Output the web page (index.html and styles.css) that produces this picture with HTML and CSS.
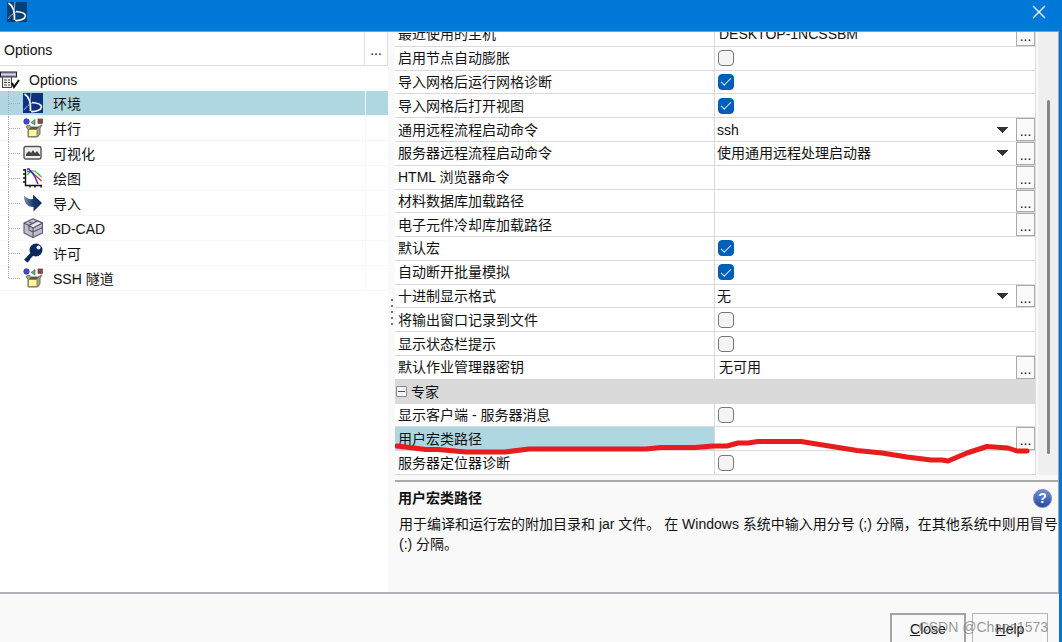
FILE: index.html
```html
<!DOCTYPE html>
<html lang="zh-CN">
<head>
<meta charset="utf-8">
<title>Options</title>
<link rel="stylesheet" href="styles.css">
</head>
<body>
<svg class="defs" aria-hidden="true">
  <symbol id="star" viewBox="0 0 20 20">
    <path d="M1.500 1C5 3 8 7 7.500 18" fill="none" stroke="#fff" stroke-width="1.700"/>
    <path d="M8 0L7 9M1 17C3 14 6 11 10 9.500" fill="none" stroke="#b9c9e2" stroke-width=".9"/>
    <path d="M9 9.500C14 10 18.500 11.500 18.500 14C18 17 13 19 8 18.500" fill="none" stroke="#fff" stroke-width="1.600"/>
  </symbol>
  <symbol id="box" viewBox="0 0 20 20">
    <circle cx="3.500" cy="3.500" r="2.700" fill="#4444f0" stroke="#30307a" stroke-width=".8"/>
    <path d="M8 4.500L12 1.500V7Z" fill="#6fae78" stroke="#47704c" stroke-width=".7"/>
    <rect x="15" y="1" width="4.500" height="4.500" fill="#9c4040" stroke="#555" stroke-width=".8"/>
    <path d="M3 8.500L6 7L8.500 9H15L19 7L17 10V16L14.500 19H5V11Z" fill="#aaa98d" stroke="#65655d" stroke-width=".9"/>
    <path d="M5.500 11.500H14V18.500H5.500Z" fill="#fff99a" stroke="#77744c" stroke-width=".8"/>
    <path d="M6 11L8 9H16L14 11Z" fill="#59583f"/>
  </symbol>
</svg>
<div class="dialog">
  <header class="titlebar">
    <svg class="app-icon" viewBox="0 0 20 20"><rect width="20" height="20" fill="#053f78"/><use href="#star"/></svg>
    <button class="close" aria-label="关闭"><svg viewBox="0 0 14 14"><path d="M1 1L13 13M13 1L1 13" stroke="#fff" stroke-width="1.300"/></svg></button>
  </header>

  <main class="content">
    <nav class="sidebar">
      <div class="tree-head"><span>Options</span><button aria-label="列">...</button></div>
      <div class="tree-root">
        <svg viewBox="0 0 20 18"><rect x="0.500" y="1" width="16" height="5" fill="#a5a0d8" stroke="#222"/><rect x="2.500" y="6" width="9" height="10.500" fill="#eee" stroke="#444"/><path d="M1 3.500H16" stroke="#dcd9f5"/><path d="M4 9H7M8 9H10M4 11.500H7M8 11.500H10M4 14H7M8 14H10" stroke="#444"/><path d="M12 12L14 16L19 9" fill="none" stroke="#111" stroke-width="2"/></svg>
        <span>Options</span>
      </div>
      <ul class="tree">
        <li class="selected"><a href="#"><svg viewBox="0 0 20 20"><rect width="20" height="20" fill="#10317f"/><use href="#star"/></svg><span>环境</span></a></li>
        <li><a href="#"><svg viewBox="0 0 20 20"><use href="#box"/></svg><span>并行</span></a></li>
        <li><a href="#"><svg viewBox="0 0 20 20"><rect x="1" y="3.500" width="17" height="12.500" rx="2" fill="#eee" stroke="#555" stroke-width="1.400"/><path d="M3 13V11L6 8L8 10L10 7L12 10L14 8L17 12V13Z" fill="#444"/></svg><span>可视化</span></a></li>
        <li><a href="#"><svg viewBox="0 0 20 20" fill="none"><path d="M2.500 1V17.500H19M0 2H2M0 6H2M0 10H2M0 14H2M7 17V19.500M12 17V19.500M18 17V19.500" stroke="#111" stroke-width="1.400"/><path d="M4 7L8 3H12L18.500 9" stroke="#20c830" stroke-width="1.200"/><path d="M4 3.500H8L18.500 13" stroke="#f02020" stroke-width="1.300"/><path d="M4 1H6L10 6L12 9L15 16" stroke="#2020f0" stroke-width="1.300"/></svg><span>绘图</span></a></li>
        <li><a href="#"><svg viewBox="0 0 20 20"><defs><linearGradient id="arrow"><stop stop-color="#7c92ad"/><stop offset=".5" stop-color="#173b6c"/><stop offset="1" stop-color="#0c2856"/></linearGradient></defs><path d="M1 2.500C4 6 7 6.500 10 6V1.500L19 10L10.500 18.500V14C5 14 1 11 1 2.500Z" fill="url(#arrow)"/></svg><span>导入</span></a></li>
        <li><a href="#"><svg viewBox="0 0 20 20" stroke="#5a596b" stroke-width="1.100" stroke-linejoin="round"><path d="M1 5L10 .8L19.500 5V15L10 19.500L1 15Z" fill="#bdbdcb"/><path d="M1 5L6 7.500L14.500 3L19.500 5L10 10V19.500M6 7.500V12L10 14L19.500 9.500M10 10L6 7.500M6 4L10.500 6" fill="none"/><path d="M6 7.500L14.500 3L19.500 5L10 10Z" fill="#e6e6ee"/></svg><span>3D-CAD</span></a></li>
        <li><a href="#"><svg viewBox="0 0 20 20"><path d="M11 9L2.500 18M4 16L6 18" stroke="#0b285d" stroke-width="4"/><circle cx="13" cy="7" r="6.500" fill="#0b285d"/><circle cx="15.500" cy="4.500" r="2" fill="#e9f0ff"/></svg><span>许可</span></a></li>
        <li><a href="#"><svg viewBox="0 0 20 20"><use href="#box"/></svg><span>SSH 隧道</span></a></li>
      </ul>
    </nav>
    <div class="splitter"><i></i><i></i><i></i><i></i><i></i></div>
    <section class="details">
      <div class="viewport">
        <form class="sheet">
          <div class="row"><label for="p1">最近使用的主机</label><div class="value"><input class="indent" id="p1" value="DESKTOP-1NCSSBM"><button type="button" class="more">...</button></div></div>
          <div class="row"><label for="p2">启用节点自动膨胀</label><div class="value"><input type="checkbox" id="p2"></div></div>
          <div class="row"><label for="p3">导入网格后运行网格诊断</label><div class="value"><input type="checkbox" id="p3" checked></div></div>
          <div class="row"><label for="p4">导入网格后打开视图</label><div class="value"><input type="checkbox" id="p4" checked></div></div>
          <div class="row"><label for="p5">通用远程流程启动命令</label><div class="value"><select id="p5"><option>ssh</option></select><button type="button" class="more">...</button></div></div>
          <div class="row"><label for="p6">服务器远程流程启动命令</label><div class="value"><select id="p6"><option>使用通用远程处理启动器</option></select><button type="button" class="more">...</button></div></div>
          <div class="row"><label for="p7">HTML 浏览器命令</label><div class="value"><input id="p7"><button type="button" class="more">...</button></div></div>
          <div class="row"><label for="p8">材料数据库加载路径</label><div class="value"><input id="p8"><button type="button" class="more">...</button></div></div>
          <div class="row"><label for="p9">电子元件冷却库加载路径</label><div class="value"><input id="p9"><button type="button" class="more">...</button></div></div>
          <div class="row"><label for="p10">默认宏</label><div class="value"><input type="checkbox" id="p10" checked></div></div>
          <div class="row"><label for="p11">自动断开批量模拟</label><div class="value"><input type="checkbox" id="p11" checked></div></div>
          <div class="row"><label for="p12">十进制显示格式</label><div class="value"><select id="p12"><option>无</option></select><button type="button" class="more">...</button></div></div>
          <div class="row"><label for="p13">将输出窗口记录到文件</label><div class="value"><input type="checkbox" id="p13"></div></div>
          <div class="row"><label for="p14">显示状态栏提示</label><div class="value"><input type="checkbox" id="p14"></div></div>
          <div class="row"><label for="p15">默认作业管理器密钥</label><div class="value"><input class="indent" id="p15" value="无可用"><button type="button" class="more">...</button></div></div>
          <div class="group"><button type="button" class="toggle" aria-label="折叠"></button><span>专家</span></div>
          <div class="row"><label for="p16">显示客户端 - 服务器消息</label><div class="value"><input type="checkbox" id="p16"></div></div>
          <div class="row active"><label for="p17">用户宏类路径</label><div class="value"><input id="p17"><button type="button" class="more">...</button></div></div>
          <div class="row"><label for="p18">服务器定位器诊断</label><div class="value"><input type="checkbox" id="p18"></div></div>
        </form>
        <div class="scrollbar"><div class="thumb"></div></div>
        <svg class="marker" viewBox="394 436 636 30"><path d="M396 446L425 449.500H437L465 452H504L528 449H645L660 447.500H694L712 446H726L737 443H747L757 441.500H800L828 446L856 450.500L881 453L906 457L930 460H941L947 461L966 453L986 446.500L1007 448L1016 451H1026" fill="none" stroke="#e81c1c" stroke-width="5" stroke-linecap="round" stroke-linejoin="round"/></svg>
      </div>
      <div class="description">
        <div class="description-head"><h2>用户宏类路径</h2><button class="help" aria-label="帮助">?</button></div>
        <p>用于编译和运行宏的附加目录和 jar 文件。 在 Windows 系统中输入用分号 (;) 分隔，在其他系统中则用冒号 (:) 分隔。</p>
      </div>
    </section>
  </main>
  <footer class="footer">
    <button class="default"><u>C</u>lose</button>
    <button><u>H</u>elp</button>
    <span class="watermark">CSDN @Chaos1573</span>
  </footer>
</div>
</body>
</html>
```
FILE: styles.css
```css
* { box-sizing: border-box; }
body { margin: 0; background: #f9f9f9; color: #111; font: 14px/20px "Liberation Sans", "Noto Sans CJK SC", sans-serif; }
button, input, select { margin: 0; padding: 0; border: 0; border-radius: 0; background: none; color: inherit; font: inherit; }
.defs { position: absolute; width: 0; height: 0; }
.dialog { display: flex; flex-direction: column; height: 100vh; overflow: hidden; border-right: 3px solid #0078d7; }
.titlebar { display: flex; align-items: center; justify-content: space-between; flex: none; height: 32px; padding: 0 13px 7px 7px; background: #0078d7; border-bottom: 1px solid #8e9bb3; }
.app-icon { width: 20px; height: 20px; }
.close svg { display: block; width: 14px; height: 14px; }

.content { display: flex; flex: 1; min-height: 0; border-right: 1px solid #a5a5ad; border-bottom: 2px solid #b2b2ba; }
.sidebar { flex: none; width: 388px; background: #fff; }
.tree-head { display: grid; grid-template-columns: 1fr 23px; height: 34px; border-bottom: 1px solid #ddd; }
.tree-head span { display: flex; align-items: center; padding: 2px 0 0 4px; border-right: 1px solid #ddd; }
.tree-head button { border-right: 1px solid #ddd; padding-top: 2px; }
.tree-root { display: flex; align-items: center; gap: 9px; height: 25px; padding-top: 2px; }
.tree-root svg { width: 20px; height: 18px; }
.tree { margin: 0; padding: 0; list-style: none; }
.tree li { position: relative; height: 25px; padding-left: 23px; border-bottom: 1px solid #f7f7f7; background: linear-gradient(#f7f7f7, #f7f7f7) 365px 0 / 1px 100% no-repeat; }
.tree li::before { content: ""; position: absolute; left: 8px; top: 0; height: 100%; border-left: 1px dotted #aaa; }
.tree li:last-child::before { height: 50%; }
.tree li::after { content: ""; position: absolute; left: 9px; top: 12px; width: 11px; border-top: 1px dotted #aaa; }
.tree .selected { background-color: #afd7e1; }
.tree a { display: flex; align-items: center; gap: 10px; height: 100%; color: inherit; text-decoration: none; }
.tree a span { padding-top: 2px; }
.tree a svg { width: 20px; height: 20px; }

.splitter { display: flex; flex-direction: column; align-items: center; justify-content: center; gap: 4px; flex: none; width: 7px; }
.splitter i { width: 2px; height: 2px; background: #777; }
.details { display: flex; flex-direction: column; flex: 1; min-width: 0; }
.viewport { position: relative; display: flex; gap: 2px; flex: 1; min-height: 0; padding-bottom: 5px; overflow: hidden; }
.sheet { display: grid; grid-auto-rows: 1fr; flex: 1; min-width: 0; margin-top: -9px; border-right: 1px solid #ddd; background: #fff; }
.row { display: grid; grid-template-columns: 1fr 1fr; min-height: 0; border-bottom: 1px solid #d9d9d9; }
.row label { display: flex; align-items: center; min-height: 0; padding-left: 3px; border-right: 1px solid #d9d9d9; }
.value { display: flex; align-items: center; min-width: 0; min-height: 0; padding-left: 2px; }
.value input:not([type]), .value select { flex: 1; min-width: 0; height: 20px; }
.value .indent { padding-left: 2px; }
.value select { appearance: none; background: conic-gradient(from -47deg at 50% 100%, #333 94deg, transparent 0) right 7px center / 13px 6px no-repeat; }
.more { flex: none; width: 19px; height: 100%; padding-top: 3px; border: 1px solid #aaa; background: #fafafa; line-height: 18px; }
.value input[type="checkbox"] { appearance: none; display: grid; place-items: center; width: 16px; height: 16px; margin-left: 1px; border: 1px solid #777; border-radius: 4px; background: #f4f4f4; }
.value input:checked { border-color: #005fb8; background: #005fb8; }
.value input:checked::before { content: ""; width: 9px; height: 4px; margin-bottom: 2px; border: solid #cfe5fa; border-width: 0 0 1px 1px; transform: rotate(-45deg); }
.active label { background: #afd7e1; }
.group { display: flex; align-items: center; gap: 4px; min-height: 0; padding-left: 1px; background: #dadada; }
.toggle { display: grid; place-items: center; width: 11px; height: 11px; border: 1px solid #888; border-radius: 1px; background: #f4f4f4; }
.toggle::before { content: ""; width: 7px; height: 1px; background: #456; }
.scrollbar { display: flex; justify-content: center; flex: none; width: 20px; padding: 68px 0 21px; background: #efefef; }
.thumb { width: 3px; border-radius: 2px; background: #858585; }
.marker { position: absolute; left: 0; bottom: 14px; width: 636px; height: 30px; pointer-events: none; }

.description { flex: none; height: 112px; padding: 6px 0 0 3px; border-top: 2px solid #aaa; }
.description-head { display: flex; align-items: center; justify-content: space-between; padding-right: 6px; }
.description h2 { margin: 0; font-size: 14px; line-height: 20px; }
.description p { margin: 6px 0 0; padding-left: 1px; }
.help { width: 19px; height: 19px; border: 1px solid #6d7fae; border-radius: 50%; background: linear-gradient(#6d8ed8, #2748a4); color: #fff; font-weight: bold; line-height: 17px; }

.footer { position: relative; display: flex; justify-content: flex-end; gap: 6px; flex: none; height: 48px; padding: 19px 11px 0 0; }
.footer button { flex: none; width: 76px; height: 31px; border: 1px solid #b5b5b5; }
.footer .default { border: 2px solid #a5a5a5; }
.watermark { position: absolute; right: 11px; bottom: 5px; color: rgba(120, 120, 120, .75); }
```
